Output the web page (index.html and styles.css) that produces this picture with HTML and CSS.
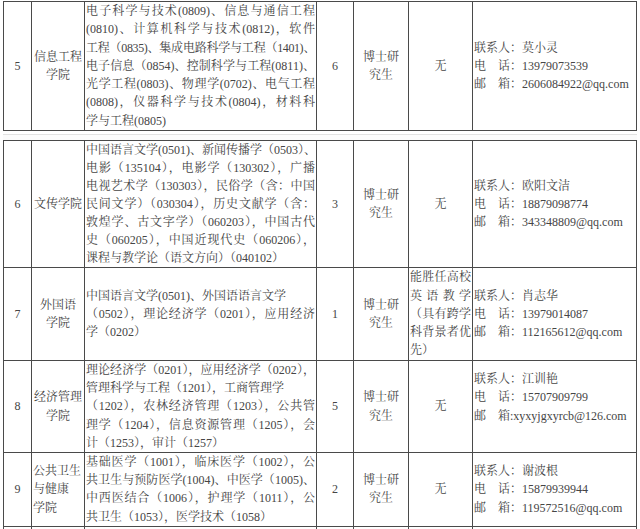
FILE: index.html
```html
<!DOCTYPE html>
<html lang="zh-CN">
<head>
<meta charset="utf-8">
<title>博士研究生招聘</title>
<link rel="stylesheet" href="styles.css">
</head>
<body>
<div class="page">
  <table class="t">
    <colgroup>
      <col class="w1"><col class="w2"><col class="w3"><col class="w4"><col class="w5"><col class="w6"><col class="w7">
    </colgroup>
    <tr class="r5">
      <td class="c">5</td>
      <td class="c"><span class="ln">信息工程</span><span class="ln">学院</span></td>
      <td>
        <span class="ln j">电子科学与技术(0809)、信息与通信工程</span>
        <span class="ln j">(0810)、计算机科学与技术(0812)，软件</span>
        <span class="ln j tight">工程（0835)、集成电路科学与工程（1401)、</span>
        <span class="ln j">电子信息（0854)、控制科学与工程(0811)、</span>
        <span class="ln j">光学工程(0803)、物理学(0702)、电气工程</span>
        <span class="ln j">(0808)，仪器科学与技术(0804)，材料科</span>
        <span class="ln">学与工程(0805)</span>
      </td>
      <td class="c">6</td>
      <td class="c"><span class="ln">博士研</span><span class="ln">究生</span></td>
      <td class="c">无</td>
      <td class="contact">
        <span class="ln">联系人：莫小灵</span>
        <span class="ln">电　话：13979073539</span>
        <span class="ln">邮　箱：2606084922@qq.com</span>
      </td>
    </tr>
  </table>

  <div class="gap"></div>

  <table class="t">
    <colgroup>
      <col class="w1"><col class="w2"><col class="w3"><col class="w4"><col class="w5"><col class="w6"><col class="w7">
    </colgroup>
    <tr class="r6">
      <td class="c">6</td>
      <td class="c"><span class="ln">文传学院</span></td>
      <td>
        <span class="ln j">中国语言文学(0501)、新闻传播学（0503）、</span>
        <span class="ln j">电影（135104），电影学（130302），广播</span>
        <span class="ln j">电视艺术学（130303），民俗学（含：中国</span>
        <span class="ln j">民间文学）（030304），历史文献学（含：</span>
        <span class="ln j">敦煌学、古文字学）（060203），中国古代</span>
        <span class="ln j">史（060205），中国近现代史（060206），</span>
        <span class="ln">课程与教学论（语文方向）（040102）</span>
      </td>
      <td class="c">3</td>
      <td class="c"><span class="ln">博士研</span><span class="ln">究生</span></td>
      <td class="c">无</td>
      <td class="contact">
        <span class="ln">联系人：欧阳文洁</span>
        <span class="ln">电　话：18879098774</span>
        <span class="ln">邮　箱：343348809@qq.com</span>
      </td>
    </tr>
    <tr class="r7">
      <td class="c">7</td>
      <td class="c"><span class="ln">外国语</span><span class="ln">学院</span></td>
      <td>
        <span class="ln">中国语言文学(0501)、外国语语言文学</span>
        <span class="ln j">（0502），理论经济学（0201），应用经济</span>
        <span class="ln">学（0202）</span>
      </td>
      <td class="c">1</td>
      <td class="c"><span class="ln">博士研</span><span class="ln">究生</span></td>
      <td>
        <span class="ln j">能胜任高校</span>
        <span class="ln j">英语教学</span>
        <span class="ln j">（具有跨学</span>
        <span class="ln j">科背景者优</span>
        <span class="ln">先）</span>
      </td>
      <td class="contact">
        <span class="ln">联系人：肖志华</span>
        <span class="ln">电　话：13979014087</span>
        <span class="ln">邮　箱：112165612@qq.com</span>
      </td>
    </tr>
    <tr class="r8">
      <td class="c">8</td>
      <td class="c"><span class="ln">经济管理</span><span class="ln">学院</span></td>
      <td>
        <span class="ln j">理论经济学（0201），应用经济学（0202），</span>
        <span class="ln">管理科学与工程（1201），工商管理学</span>
        <span class="ln j">（1202），农林经济管理（1203），公共管</span>
        <span class="ln j">理学（1204），信息资源管理（1205），会</span>
        <span class="ln">计（1253），审计（1257）</span>
      </td>
      <td class="c">5</td>
      <td class="c"><span class="ln">博士研</span><span class="ln">究生</span></td>
      <td class="c">无</td>
      <td class="contact">
        <span class="ln">联系人：江训艳</span>
        <span class="ln">电　话：15707909799</span>
        <span class="ln">邮　箱:xyxyjgxyrcb@126.com</span>
        <span class="ln">&nbsp;</span>
      </td>
    </tr>
    <tr class="r9">
      <td class="c">9</td>
      <td><span class="ln">公共卫生</span><span class="ln">与健康</span><span class="ln">学院</span></td>
      <td>
        <span class="ln j">基础医学（1001），临床医学（1002），公</span>
        <span class="ln j">共卫生与预防医学(1004)、中医学（1005)、</span>
        <span class="ln j">中西医结合（1006），护理学（1011），公</span>
        <span class="ln">共卫生（1053），医学技术（1058）</span>
      </td>
      <td class="c">2</td>
      <td class="c"><span class="ln">博士研</span><span class="ln">究生</span></td>
      <td class="c">无</td>
      <td class="contact">
        <span class="ln">联系人：谢波根</span>
        <span class="ln">电　话：15879939944</span>
        <span class="ln">邮　箱：119572516@qq.com</span>
      </td>
    </tr>
    <tr class="r10">
      <td></td><td></td><td></td><td></td><td></td><td></td><td></td>
    </tr>
  </table>
</div>
</body>
</html>
```
FILE: styles.css
```css
html, body {
  margin: 0;
  background: #ffffff;
}

.page {
  padding: 1px 3px 0 3px;
  font-family: "Liberation Serif", "Noto Serif CJK SC", "Noto Sans CJK SC", serif;
  font-size: 12px;
  color: #454545;
}

.t {
  border-collapse: separate;
  border-spacing: 0;
  table-layout: fixed;
  width: 634px;
  border-left: 1px solid #4a4a4a;
  border-top: 1px solid #4a4a4a;
}

.w1 { width: 28px; }
.w2 { width: 53px; }
.w3 { width: 232px; }
.w4 { width: 37px; }
.w5 { width: 55px; }
.w6 { width: 64px; }
.w7 { width: 164px; }

.t td {
  border-right: 1px solid #4a4a4a;
  border-bottom: 1px solid #4a4a4a;
  padding: 0 1px;
  vertical-align: middle;
  line-height: 18.2px;
  text-align: left;
}

.t td.c {
  text-align: center;
}

.ln {
  display: block;
  white-space: nowrap;
}

.j {
  text-align: justify;
  text-align-last: justify;
}

.tight {
  letter-spacing: -0.4px;
}

.r5 { height: 129px; }
.r6 { height: 127px; }
.r6 td { line-height: 18px; }
.r7 { height: 93px; }
.r8 { height: 92px; }
.r9 { height: 71px; }
.r10 { height: 20px; }

.contact {
  padding-left: 1px;
}

.gap {
  height: 9px;
  position: relative;
  background: #fbfbfb;
  border-top: 3px solid #ffffff;
  box-sizing: border-box;
}

.gap::before {
  content: "";
  display: block;
  height: 1px;
  background: #e2e2e2;
}
```
